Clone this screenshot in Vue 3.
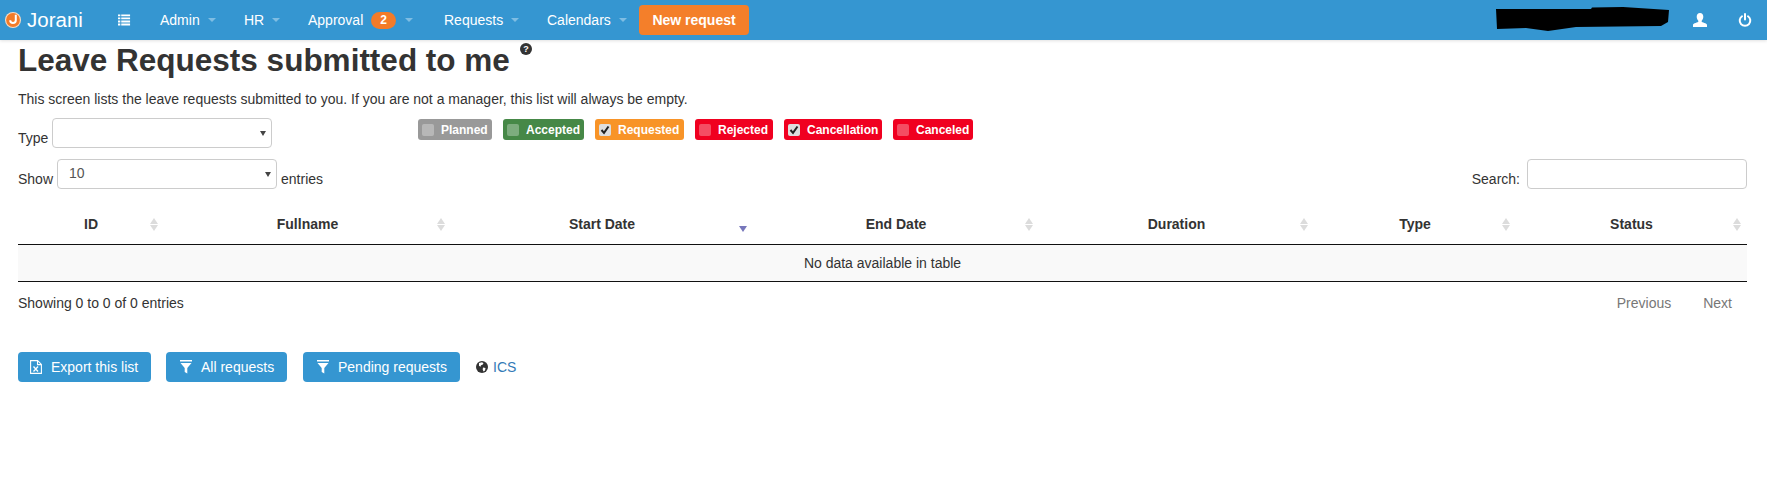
<template>
  <div class="page">
    <nav class="navbar">
      <a class="brand">
        <svg class="logo" viewBox="0 0 16 16">
          <circle cx="8" cy="8" r="8" fill="#f9dcc4" />
          <circle cx="8" cy="8" r="6.900" fill="#f37b29" />
          <path d="M10.800 2.800v5.400a2.800 2.800 0 0 1-5.600 0" fill="none" stroke="#fff" stroke-width="2" />
        </svg>
        Jorani
      </a>
      <svg class="list-icon" viewBox="0 0 14 12">
        <path fill="#fff" d="M0 0h2.500v2H0zM3.500 0H13v2H3.500zM0 3.300h2.500v2H0zM3.500 3.300H13v2H3.500zM0 6.600h2.500v2H0zM3.500 6.600H13v2H3.500zM0 9.900h2.500v2H0zM3.500 9.900H13v2H3.500z" />
      </svg>
      <ul class="menu">
        <li v-for="item in menu" :key="item.label" :style="{ width: item.width + 'px' }">
          {{ item.label }}
          <span v-if="item.badge" class="nav-badge">{{ item.badge }}</span>
          <i class="caret"></i>
        </li>
      </ul>
      <button class="new-request">New request</button>
      <div class="nav-right">
        <svg class="redacted" viewBox="0 1 174 26">
          <path d="M0 3 L95 3 L96 1.500 L127 1 L173 4 L172 16 L165 20 L80 21 L52 25 L30 22 L1 23Z" fill="#000" />
        </svg>
        <svg class="user-icon" viewBox="0 0 14 14">
          <path fill="#fff" d="M7 0c2.100 0 3.300 1.600 3.300 3.700 0 1.700-.8 3.200-1.600 4v1.100c0 .8 5.300 1.300 5.300 3.200V14H0v-2c0-1.900 5.300-2.400 5.300-3.200V7.700c-.8-.8-1.600-2.300-1.600-4C3.700 1.600 4.900 0 7 0z" />
        </svg>
        <svg class="power-icon" viewBox="0 0 14 14">
          <path d="M4 3.200a5.300 5.300 0 1 0 6 0" fill="none" stroke="#fff" stroke-width="2" stroke-linecap="round" />
          <path d="M7 1v5.500" fill="none" stroke="#fff" stroke-width="2" stroke-linecap="round" />
        </svg>
      </div>
    </nav>

    <main class="content">
      <h1>
        Leave Requests submitted to me
        <span class="help">?</span>
      </h1>
      <p class="intro">This screen lists the leave requests submitted to you. If you are not a manager, this list will always be empty.</p>

      <div class="filters">
        <label class="type-filter">
          Type
          <span class="select type-select"><i class="select-arrow"></i></span>
        </label>
        <div class="statuses">
          <span
            v-for="status in statuses"
            :key="status.label"
            class="status"
            :style="{ background: status.color, width: status.width + 'px' }"
          >
            <span class="check" :class="{ checked: status.checked }">
              <svg v-if="status.checked" viewBox="0 0 12 12">
                <path d="M2.500 6 5 8.800 9.500 2.500" fill="none" stroke="#222" stroke-width="2" />
              </svg>
            </span>
            {{ status.label }}
          </span>
        </div>
      </div>

      <div class="table-top">
        <label class="length">
          Show
          <span class="select length-select">10<i class="select-arrow"></i></span>
          entries
        </label>
        <label class="search">
          Search:
          <span class="search-box"></span>
        </label>
      </div>

      <table>
        <colgroup>
          <col v-for="col in columns" :key="col.label" :style="{ width: col.width + 'px' }" />
        </colgroup>
        <thead>
          <tr>
            <th v-for="col in columns" :key="col.label">
              {{ col.label }}
              <span v-if="col.sorted" class="sort sorted"></span>
              <span v-else class="sort"></span>
            </th>
          </tr>
        </thead>
        <tbody>
          <tr>
            <td colspan="7">No data available in table</td>
          </tr>
        </tbody>
      </table>

      <div class="table-bottom">
        <span>Showing 0 to 0 of 0 entries</span>
        <div class="pager">
          <span>Previous</span>
          <span>Next</span>
        </div>
      </div>

      <div class="actions">
        <button class="btn export">
          <svg class="btn-icon" viewBox="0 0 12 14">
            <path d="M.6.600h7l3.800 3.800v9H.6z M7.500.600v4h3.900" fill="none" stroke="#fff" stroke-width="1.100" />
            <path d="M3.500 6.500l4.500 5M8 6.500l-4.500 5" fill="none" stroke="#fff" stroke-width="1.300" />
          </svg>
          Export this list
        </button>
        <button class="btn all">
          <svg class="btn-icon" viewBox="0 0 12 14">
            <path fill="#fff" d="M0 0h12v1.400H0zM.5 3h11L7.300 8v5.500L4.700 12V8z" />
          </svg>
          All requests
        </button>
        <button class="btn pending">
          <svg class="btn-icon" viewBox="0 0 12 14">
            <path fill="#fff" d="M0 0h12v1.400H0zM.5 3h11L7.300 8v5.500L4.700 12V8z" />
          </svg>
          Pending requests
        </button>
        <span class="ics">
          <svg viewBox="0 0 12 12">
            <circle cx="6" cy="6" r="6" fill="#333" />
            <path fill="#fff" d="M3 2l3-.7 1.500 1-1 1.500-1.500.5-.5 1.500-1.500-1zM7 6.500l2.500.5L9 9.500 7.500 10.500 6.700 8.500z" />
          </svg>
          <a>ICS</a>
        </span>
      </div>
    </main>
  </div>
</template>

<script setup>
const menu = [
  { label: 'Admin', width: 84 },
  { label: 'HR', width: 64 },
  { label: 'Approval', badge: 2, width: 136 },
  { label: 'Requests', width: 103 },
  { label: 'Calendars', width: 92 }
];

const statuses = [
  { label: 'Planned', color: '#999999', width: 74, checked: false },
  { label: 'Accepted', color: '#468847', width: 81, checked: false },
  { label: 'Requested', color: '#f89428', width: 89, checked: true },
  { label: 'Rejected', color: '#f00020', width: 78, checked: false },
  { label: 'Cancellation', color: '#f00020', width: 98, checked: true },
  { label: 'Canceled', color: '#f00020', width: 80, checked: false }
];

const columns = [
  { label: 'ID', width: 146 },
  { label: 'Fullname', width: 287 },
  { label: 'Start Date', width: 302, sorted: true },
  { label: 'End Date', width: 286 },
  { label: 'Duration', width: 275 },
  { label: 'Type', width: 202 },
  { label: 'Status', width: 231 }
];
</script>

<style>
html,
body {
  margin: 0;
  background: #fff;
}
</style>

<style scoped>
.page {
  height: 490px;
  overflow: hidden;
  font-family: "Liberation Sans", Arial, sans-serif;
  font-size: 14px;
  color: #333;
}

/* top bar */
.navbar {
  display: flex;
  align-items: center;
  height: 40px;
  background: #3596d1;
  color: #fff;
  box-shadow: 0 1px 3px rgba(0, 0, 0, 0.12);
}

.brand {
  display: flex;
  align-items: center;
  gap: 6px;
  width: 118px;
  padding-left: 5px;
  box-sizing: border-box;
  font-size: 20.500px;
}

.logo {
  width: 16px;
  height: 16px;
}

.list-icon {
  width: 13px;
  height: 12px;
  margin-right: 29px;
}

.menu {
  display: flex;
  margin: 0;
  padding: 0;
  list-style: none;
}

.menu li {
  display: flex;
  align-items: center;
  white-space: pre;
}

.nav-badge {
  width: 25px;
  height: 17px;
  margin-left: 4px;
  border-radius: 9px;
  background: #f37b29;
  font-size: 12px;
  font-weight: bold;
  line-height: 17px;
  text-align: center;
}

.caret {
  width: 0;
  height: 0;
  margin-left: 4px;
  border-top: 4px solid #7fbde3;
  border-left: 4px solid transparent;
  border-right: 4px solid transparent;
}

.nav-badge + .caret {
  margin-left: 9px;
}

.new-request {
  width: 110px;
  height: 30px;
  padding: 0;
  border: none;
  border-radius: 4px;
  background: #f47f2a;
  color: #fff;
  font: bold 14px "Liberation Sans", Arial, sans-serif;
}

.nav-right {
  display: flex;
  align-items: center;
  margin-left: auto;
}

.redacted {
  width: 174px;
  height: 26px;
}

.user-icon {
  width: 14px;
  height: 14px;
  margin-left: 23px;
}

.power-icon {
  width: 14px;
  height: 14px;
  margin-left: 31px;
  margin-right: 15px;
}

/* page body */
.content {
  padding: 0 20px 0 18px;
}

h1 {
  position: relative;
  margin: 0;
  padding-top: 3px;
  font-size: 31.500px;
  line-height: 34px;
  font-weight: bold;
  color: #333;
}

.help {
  position: absolute;
  left: 502px;
  top: 3px;
  width: 12px;
  height: 12px;
  border-radius: 50%;
  background: #333;
  color: #fff;
  font-size: 9px;
  line-height: 12px;
  text-align: center;
}

.intro {
  margin: 12px 0 0;
  line-height: 20px;
}

.filters {
  display: flex;
  margin-top: 10px;
}

.type-filter {
  display: flex;
  align-items: flex-end;
  width: 400px;
  gap: 4px;
  line-height: 20px;
}

.select {
  position: relative;
  display: block;
  height: 30px;
  box-sizing: border-box;
  border: 1px solid #ccc;
  border-radius: 4px;
  background: #fff;
}

.type-select {
  width: 220px;
  margin-top: -1px;
}

.length-select {
  width: 220px;
  padding-left: 11px;
  line-height: 26px;
  color: #555;
}

.select-arrow {
  position: absolute;
  right: 5px;
  top: 12px;
  width: 0;
  height: 0;
  border-top: 5px solid #444;
  border-left: 3px solid transparent;
  border-right: 3px solid transparent;
}

.statuses {
  display: flex;
  gap: 11px;
  height: 21px;
}

.status {
  display: flex;
  align-items: center;
  gap: 7px;
  box-sizing: border-box;
  height: 21px;
  padding-left: 4px;
  border-radius: 3px;
  color: #fff;
  font-size: 12px;
  font-weight: bold;
  white-space: nowrap;
}

.check {
  display: block;
  width: 12px;
  height: 12px;
  border-radius: 2px;
  background: rgba(255, 255, 255, 0.3);
}

.check.checked {
  background: #dedede;
}

.check svg {
  display: block;
  width: 12px;
  height: 12px;
}

.table-top {
  display: flex;
  justify-content: space-between;
  margin-top: 11px;
}

.length,
.search {
  display: flex;
  align-items: flex-end;
  gap: 4px;
  line-height: 20px;
}

.search {
  gap: 7px;
}

.search-box {
  display: block;
  width: 220px;
  height: 30px;
  box-sizing: border-box;
  border: 1px solid #ccc;
  border-radius: 4px;
}

table {
  width: 1729px;
  margin-top: 15px;
  table-layout: fixed;
  border-collapse: separate;
  border-spacing: 0;
}

th {
  position: relative;
  height: 41px;
  padding: 10px 18px 11px;
  box-sizing: border-box;
  border-bottom: 1px solid #111;
  text-align: center;
  font-size: 14px;
  font-weight: bold;
}

td {
  height: 37px;
  padding: 0;
  box-sizing: border-box;
  border-bottom: 1px solid #111;
  background: #f9f9f9;
  text-align: center;
}

.sort {
  position: absolute;
  right: 6px;
  top: 14px;
  width: 8px;
  height: 13px;
}

.sort::before,
.sort::after {
  content: "";
  position: absolute;
  left: 0;
  border-left: 4px solid transparent;
  border-right: 4px solid transparent;
}

.sort::before {
  top: 0;
  border-bottom: 6px solid #dcdcdc;
}

.sort::after {
  bottom: 0;
  border-top: 6px solid #dcdcdc;
}

.sort.sorted::before {
  display: none;
}

.sort.sorted::after {
  bottom: -1px;
  border-top-color: #7777bb;
}

.table-bottom {
  display: flex;
  justify-content: space-between;
  align-items: center;
  width: 1729px;
  height: 42px;
}

.pager {
  display: flex;
  gap: 32px;
  padding-right: 15px;
  color: #777;
}

.actions {
  display: flex;
  align-items: center;
  margin-top: 28px;
}

.btn {
  display: flex;
  align-items: center;
  height: 30px;
  padding: 0;
  border: none;
  border-radius: 4px;
  background: #3596d1;
  color: #fff;
  font: 14px "Liberation Sans", Arial, sans-serif;
}

.btn-icon {
  width: 12px;
  height: 14px;
  margin-right: 9px;
}

.export {
  width: 133px;
  padding-left: 12px;
}

.all {
  width: 121px;
  margin-left: 15px;
  padding-left: 14px;
}

.pending {
  width: 157px;
  margin-left: 16px;
  padding-left: 14px;
}

.ics {
  display: flex;
  align-items: center;
  gap: 5px;
  margin-left: 16px;
}

.ics svg {
  width: 12px;
  height: 12px;
}

.ics a {
  color: #337ab7;
}
</style>
